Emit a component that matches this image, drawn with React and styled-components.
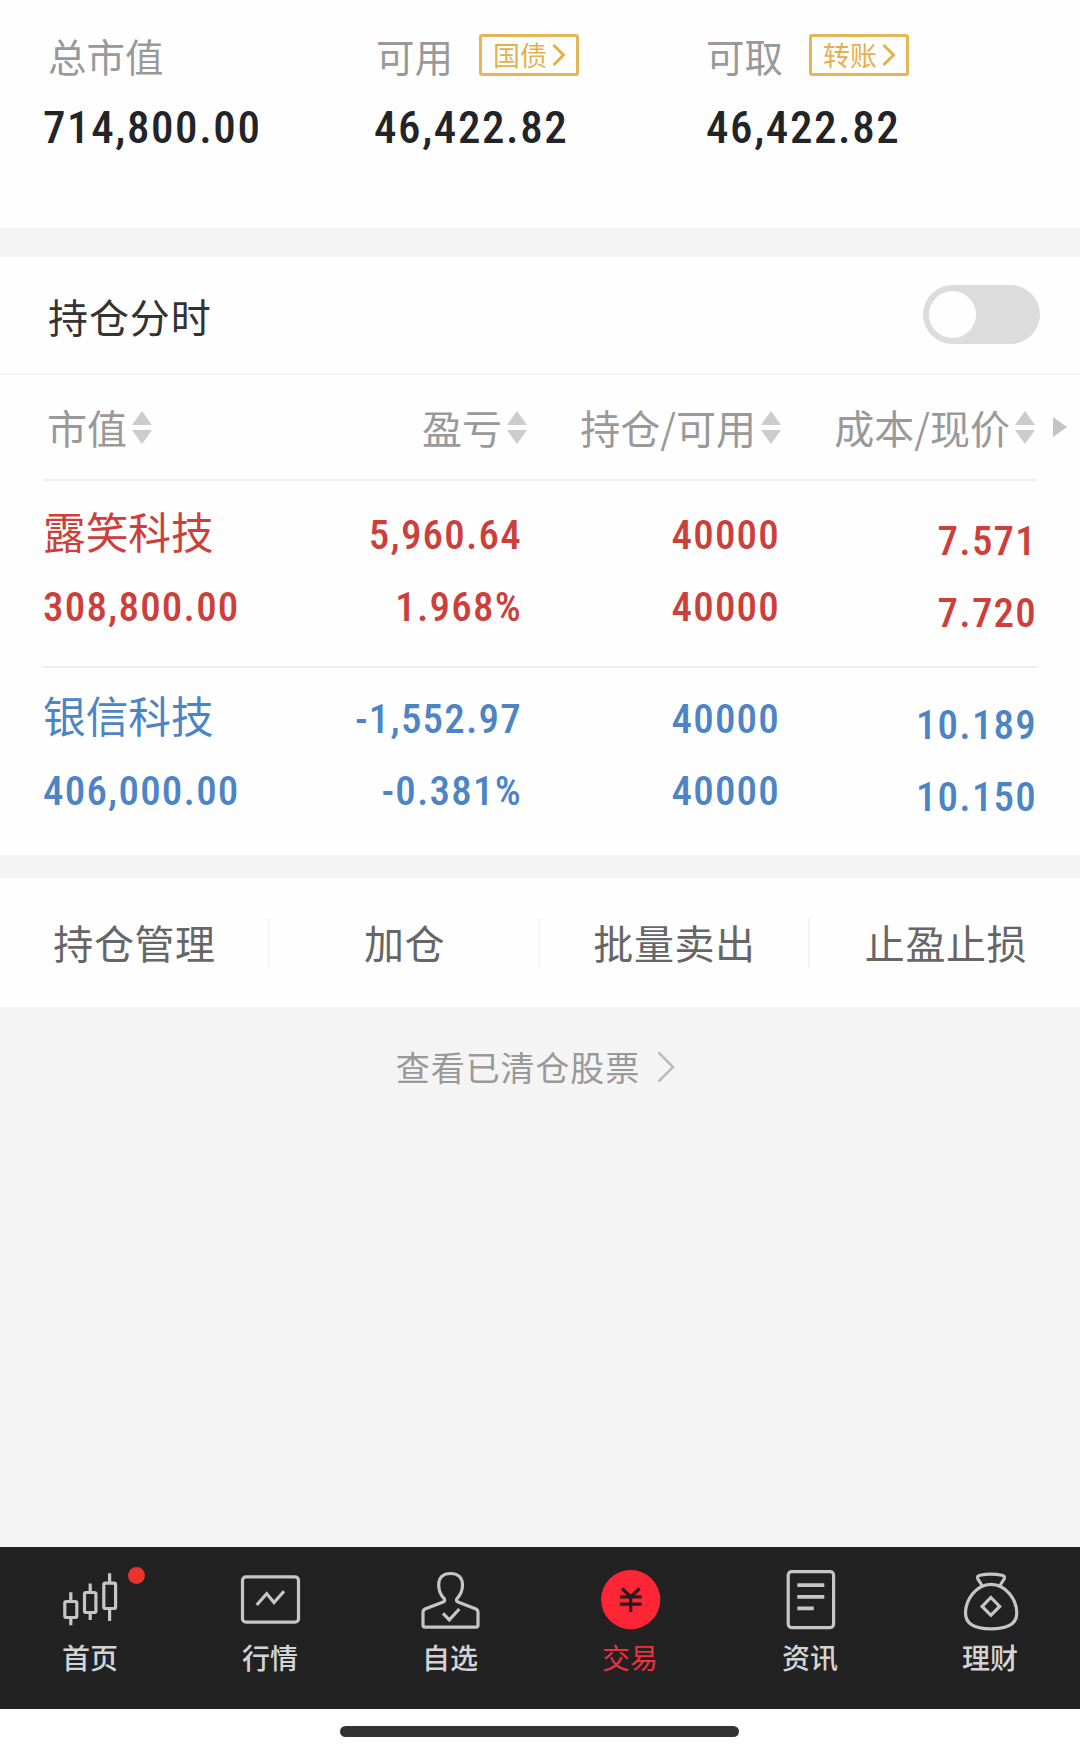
import React, { useState } from 'react';
import styled, { createGlobalStyle, css } from 'styled-components';

const summary = [
    { label: '总市值', value: '714,800.00', indent: 6 },
    { label: '可用', value: '46,422.82', link: '国债', indent: 3 },
    { label: '可取', value: '46,422.82', link: '转账', indent: 1 },
];

const columns = ['市值', '盈亏', '持仓/可用', '成本/现价'];

const holdings = [
    {
        name: '露笑科技',
        value: '308,800.00',
        profit: '5,960.64',
        percent: '1.968%',
        held: '40000',
        usable: '40000',
        cost: '7.571',
        price: '7.720',
        color: '#cc3f3b',
    },
    {
        name: '银信科技',
        value: '406,000.00',
        profit: '-1,552.97',
        percent: '-0.381%',
        held: '40000',
        usable: '40000',
        cost: '10.189',
        price: '10.150',
        color: '#4c84c6',
    },
];

const actions = ['持仓管理', '加仓', '批量卖出', '止盈止损'];

const HomeIcon = () => (
    <Icon viewBox="0 0 80 64">
        <rect x="14.8" y="34.5" width="12" height="16" rx="1.5" />
        <path d="M20.8 25.3V34M20.8 51v7.3" />
        <rect x="34.5" y="25.5" width="11.4" height="20" rx="1.5" />
        <path d="M40.2 16.5V25M40.2 46v7" />
        <rect x="53.8" y="16.2" width="11.8" height="25.3" rx="1.5" />
        <path d="M59.6 6.3V16M59.6 42v12" />
    </Icon>
);

const MarketIcon = () => (
    <Icon viewBox="0 0 80 64">
        <rect x="12.5" y="9.8" width="56" height="45.4" rx="3.5" />
        <path d="M26.7 38L36.7 26.6L44 35.5L54 24.3" />
    </Icon>
);

const WatchIcon = () => (
    <Icon viewBox="0 0 80 64">
        <path d="M34.5 32C30.5 28 28.7 24 28.7 18C28.7 10.5 33 6.5 40.5 6.5C48 6.5 52.5 10.5 52.5 18C52.5 24 50.5 28 46.7 32Q46 34 48 35L66 42Q68 43 68 45V58Q68 60.2 66 60.2H15Q13 60.2 13 58V45Q13 43 15 42L33.2 35Q35.2 34 34.5 32Z" />
        <path d="M33 46.3L39.3 52.8L49.3 42" />
    </Icon>
);

const TradeIcon = () => (
    <Icon viewBox="0 0 80 64">
        <circle cx="40.7" cy="32.6" r="29.6" fill="#fe2535" stroke="none" />
        <path d="M32 21.5L40.7 29.7L49.6 21.5M30 29.9H51.6M30 37.2H51.6M40.7 29.7V45" stroke="#2a1a1c" />
    </Icon>
);

const NewsIcon = () => (
    <Icon viewBox="0 0 80 64">
        <rect x="18.2" y="4.6" width="45.4" height="56" rx="3.5" />
        <path d="M27.3 18.2H54.3M27.3 29.8H54.3M27.3 41.4H43.8" strokeWidth="3.8" />
    </Icon>
);

const WealthIcon = () => (
    <Icon viewBox="0 0 80 64">
        <path d="M32 18.5L27.8 11.8Q26.8 8.9 30 8.2Q41 6.2 52 8.2Q55.2 8.9 54.2 11.8L50 18.5" />
        <path d="M41 17.3C26 17.3 15.5 33 15.5 46C15.5 57 24 61.8 41 61.8C58 61.8 66.8 57 66.8 46C66.8 33 56 17.3 41 17.3Z" />
        <path d="M40.9 30.5L49.7 39.4L40.9 48.3L32.1 39.4Z" />
    </Icon>
);

const tabs = [
    { label: '首页', icon: HomeIcon, badge: true },
    { label: '行情', icon: MarketIcon },
    { label: '自选', icon: WatchIcon },
    { label: '交易', icon: TradeIcon, active: true },
    { label: '资讯', icon: NewsIcon },
    { label: '理财', icon: WealthIcon },
];

const SortArrows = () => (
    <Arrows viewBox="0 0 20 33">
        <path d="M10 0L20 14H0ZM10 33L0 19H20Z" />
    </Arrows>
);

const App = () => {
    const [ timeline, setTimeline ] = useState(false);

    return (
        <>
        <GlobalStyle />
        <Page>
            <Summary>
                {summary.map((item) => (
                    <SummaryItem key={item.label}>
                        <SummaryLabel $indent={item.indent}>
                            {item.label}
                            {item.link && (
                                <LinkTag>
                                    {item.link}
                                    <TagChevron viewBox="0 0 14 22">
                                        <path d="M1.5 1L11.5 11L1.5 21" />
                                    </TagChevron>
                                </LinkTag>
                            )}
                        </SummaryLabel>
                        <SummaryValue>{item.value}</SummaryValue>
                    </SummaryItem>
                ))}
            </Summary>

            <ToggleRow>
                <span>持仓分时</span>
                <Toggle $on={timeline} onClick={() => setTimeline(!timeline)}>
                    <Knob />
                </Toggle>
            </ToggleRow>

            <TableHead>
                {columns.map((column) => (
                    <HeadCell key={column}>
                        {column}
                        <SortArrows />
                    </HeadCell>
                ))}
                <MoreArrow viewBox="0 0 14 20">
                    <path d="M0 0L14 10L0 20Z" />
                </MoreArrow>
            </TableHead>

            <Holdings>
                {holdings.map((stock) => (
                    <HoldingRow key={stock.name} $color={stock.color}>
                        <Cell>
                            <StockName>{stock.name}</StockName>
                            <Num>{stock.value}</Num>
                        </Cell>
                        <Cell $right>
                            <Num>{stock.profit}</Num>
                            <Num>{stock.percent}</Num>
                        </Cell>
                        <Cell $right>
                            <Num>{stock.held}</Num>
                            <Num>{stock.usable}</Num>
                        </Cell>
                        <Cell $right $drop>
                            <Num>{stock.cost}</Num>
                            <Num>{stock.price}</Num>
                        </Cell>
                    </HoldingRow>
                ))}
            </Holdings>

            <Actions>
                {actions.map((action) => <Action key={action}>{action}</Action>)}
            </Actions>

            <Cleared>
                查看已清仓股票
                <ClearedChevron viewBox="0 0 18 32">
                    <path d="M1.5 1.5L16 16L1.5 30.5" />
                </ClearedChevron>
            </Cleared>

            <TabBar>
                {tabs.map(({ label, icon: TabIcon, active, badge }) => (
                    <Tab key={label} $active={active}>
                        <TabIcon />
                        {badge && <Badge />}
                        {label}
                    </Tab>
                ))}
            </TabBar>
            <HomeArea>
                <HomeIndicator />
            </HomeArea>
        </Page>
        </>
    );
};


const GlobalStyle = createGlobalStyle`
    * {
        box-sizing: border-box;
    }

    body {
        margin: 0;
        background-color: #f4f4f4;
        font-family: "Noto Sans CJK SC", "Noto Sans", sans-serif;
    }
`

const Page = styled.div`
    width: 1080px;
    height: 1753px;
    display: flex;
    flex-direction: column;
    background-color: #f4f4f4;
`

const Summary = styled.section`
    height: 228px;
    display: grid;
    grid-template-columns: 331px 332px 1fr;
    padding: 27px 0 0 42px;
    background-color: #fefefe;
`

const SummaryItem = styled.div`
    display: flex;
    flex-direction: column;
`

const SummaryLabel = styled.div`
    height: 56px;
    display: flex;
    align-items: center;
    padding-left: ${props => props.$indent}px;
    font-size: 38.5px;
    line-height: 56px;
    color: #999;
`

const LinkTag = styled.button`
    width: 100px;
    height: 42px;
    display: flex;
    align-items: center;
    margin: 0 0 0 26px;
    padding: 0 0 0 11px;
    border: 3px solid #e5b658;
    border-radius: 3px;
    background: none;
    font-family: inherit;
    font-size: 27px;
    line-height: 36px;
    color: #e5b04c;
`

const TagChevron = styled.svg`
    width: 14px;
    height: 22px;
    margin-left: 5px;
    fill: none;
    stroke: #e5b04c;
    stroke-width: 3;
`

/* figures are set in the condensed face with loose tracking */
const figures = css`
    font-family: Roboto, sans-serif;
    font-weight: 500;
    font-stretch: 75%;
    white-space: nowrap;
`

const SummaryValue = styled.div`
    ${figures}
    margin-top: 18px;
    padding-left: 1px;
    font-size: 45px;
    line-height: 54px;
    letter-spacing: 1.6px;
    color: #222428;
`

const ToggleRow = styled.section`
    height: 118px;
    display: flex;
    justify-content: space-between;
    align-items: center;
    margin-top: 29px;
    padding: 0 40px 1px 48px;
    border-bottom: 2px solid #f5f5f5;
    background-color: #fefefe;
    font-size: 40px;
    letter-spacing: .9px;
    color: #333;

    span {
        padding-top: 2px;
    }
`

const Toggle = styled.button`
    width: 117px;
    height: 59px;
    display: flex;
    align-items: center;
    justify-content: ${props => props.$on ? 'flex-end' : 'flex-start'};
    padding: 0 6px;
    border: none;
    border-radius: 30px;
    background-color: #dcdcdc;
`

const Knob = styled.div`
    width: 47px;
    height: 47px;
    border-radius: 50%;
    background-color: #fefefe;
`

const TableHead = styled.div`
    height: 104px;
    display: grid;
    grid-template-columns: 213px 267px 254px 254px 1fr;
    align-items: center;
    padding-left: 47px;
    background-color: #fefefe;
    font-size: 40px;
    color: #999;
`

const HeadCell = styled.div`
    display: flex;
    align-items: center;
    justify-content: flex-end;
    line-height: 50px;

    &:first-child {
        justify-content: flex-start;
    }
`

const Arrows = styled.svg`
    width: 20px;
    height: 33px;
    margin-left: 5px;
    fill: #ccc;
`

const MoreArrow = styled.svg`
    width: 14px;
    height: 20px;
    margin-left: 18px;
    fill: #c4c4c4;
`

const Holdings = styled.section`
    height: 376px;
    padding: 0 43px;
    background-color: #fefefe;
`

const HoldingRow = styled.div`
    height: 187px;
    display: grid;
    grid-template-columns: 217px 262px 258px 257px;
    padding-top: 21px;
    border-top: 2px solid #eee;
    color: ${props => props.$color};

    & + & {
        padding-top: 18px;
    }
`

const Cell = styled.div`
    display: flex;
    flex-direction: column;
    padding-top: ${props => props.$drop ? '6px' : '0'};

    ${props => props.$right && css`
        align-items: flex-end;
    `}
`

const StockName = styled.div`
    height: 72px;
    font-size: 42.7px;
    line-height: 56px;
`

const Num = styled.div`
    ${figures}
    height: 72px;
    font-size: 41px;
    line-height: 67px;
    letter-spacing: 1.2px;
`

const Actions = styled.section`
    height: 129px;
    display: grid;
    grid-template-columns: repeat(4, 1fr);
    align-items: center;
    margin-top: 23px;
    background-color: #fefefe;
`

const Action = styled.button`
    height: 50px;
    padding: 0 0 1px 1px;
    border: none;
    border-right: 2px solid #f3f3f3;
    background: none;
    font-family: inherit;
    font-size: 40px;
    line-height: 48px;
    letter-spacing: .6px;
    color: #666;

    &:last-child {
        padding-left: 2px;
        border-right: none;
    }
`

const Cleared = styled.div`
    flex: 1;
    display: flex;
    align-items: flex-start;
    justify-content: center;
    padding: 35px 9px 0 0;
    font-size: 34px;
    line-height: 50px;
    letter-spacing: .9px;
    color: #999;
`

const ClearedChevron = styled.svg`
    width: 18px;
    height: 32px;
    margin: 9px 0 0 17px;
    fill: none;
    stroke: #bbb;
    stroke-width: 2.5;
`

const TabBar = styled.nav`
    height: 162px;
    display: grid;
    grid-template-columns: repeat(6, 1fr);
    background-color: #222;
`

const Tab = styled.a`
    position: relative;
    display: flex;
    flex-direction: column;
    align-items: center;
    padding-top: 20px;
    font-size: 28px;
    font-weight: ${props => props.$active ? 400 : 500};
    line-height: 52px;
    color: ${props => props.$active ? '#ee3040' : '#d4d4d4'};
`

const Icon = styled.svg`
    width: 80px;
    height: 64px;
    fill: none;
    stroke: #c6c6c6;
    stroke-width: 3.2;
`

const Badge = styled.span`
    position: absolute;
    top: 20px;
    left: 128px;
    width: 17px;
    height: 17px;
    border-radius: 50%;
    background-color: #ea3430;
`

const HomeArea = styled.div`
    height: 44px;
    display: flex;
    align-items: flex-start;
    justify-content: center;
    padding: 17px 1px 0 0;
    background-color: #fff;
`

const HomeIndicator = styled.div`
    width: 399px;
    height: 11px;
    border-radius: 6px;
    background-color: #333;
`

export default App;
